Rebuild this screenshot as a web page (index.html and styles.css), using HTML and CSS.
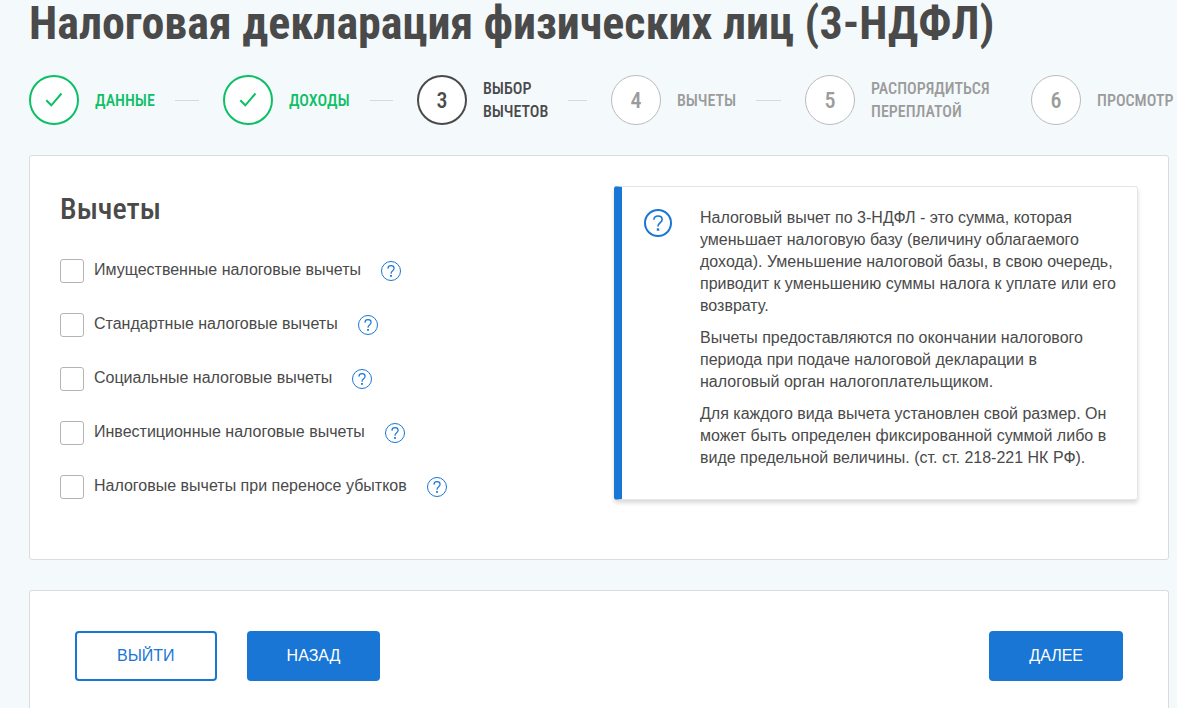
FILE: index.html
```html
<!DOCTYPE html>
<html lang="ru">
<head>
<meta charset="utf-8">
<title>Налоговая декларация физических лиц (3-НДФЛ)</title>
<link rel="stylesheet" href="styles.css">
</head>
<body>
<svg class="sprite" aria-hidden="true">
  <symbol id="question" viewBox="1 1 18 18">
    <path d="M6.9 7.6C7 5.7 8.2 4.7 10 4.7s3.1 1 3.1 2.6c0 1.4-.9 2-1.7 2.7-.9.7-1.4 1.2-1.4 2.7" fill="none" stroke="currentColor" stroke-width="1.2"/>
    <rect x="9.1" y="14" width="1.8" height="1.8" fill="currentColor"/>
  </symbol>
  <symbol id="check" viewBox="0 0 18 16">
    <path d="M1.3 8.3l5 5L16.5 1.5" fill="none" stroke="currentColor" stroke-width="2"/>
  </symbol>
</svg>
<div class="page">
  <h1 class="title">Налоговая декларация физических лиц (3-НДФЛ)</h1>

  <ol class="steps">
    <li class="step step--done"><span class="step-mark"><svg class="step-check"><use href="#check"/></svg></span><span class="step-label">Данные</span></li>
    <li class="step step--done"><span class="step-mark"><svg class="step-check"><use href="#check"/></svg></span><span class="step-label">Доходы</span></li>
    <li class="step step--current" aria-current="step"><span class="step-mark">3</span><span class="step-label">Выбор<br>вычетов</span></li>
    <li class="step"><span class="step-mark">4</span><span class="step-label">Вычеты</span></li>
    <li class="step step--plain"><span class="step-mark">5</span><span class="step-label">Распорядиться<br>переплатой</span></li>
    <li class="step step--plain"><span class="step-mark">6</span><span class="step-label">Просмотр</span></li>
  </ol>

  <main class="card deductions">
    <section class="choices">
      <h2 class="subtitle">Вычеты</h2>
      <div class="choice"><input class="box" type="checkbox" id="d1"><label class="choice-label" for="d1">Имущественные налоговые вычеты</label><button class="help" type="button" aria-label="Справка"><svg class="help-icon"><use href="#question"/></svg></button></div>
      <div class="choice"><input class="box" type="checkbox" id="d2"><label class="choice-label" for="d2">Стандартные налоговые вычеты</label><button class="help" type="button" aria-label="Справка"><svg class="help-icon"><use href="#question"/></svg></button></div>
      <div class="choice"><input class="box" type="checkbox" id="d3"><label class="choice-label" for="d3">Социальные налоговые вычеты</label><button class="help" type="button" aria-label="Справка"><svg class="help-icon"><use href="#question"/></svg></button></div>
      <div class="choice"><input class="box" type="checkbox" id="d4"><label class="choice-label" for="d4">Инвестиционные налоговые вычеты</label><button class="help" type="button" aria-label="Справка"><svg class="help-icon"><use href="#question"/></svg></button></div>
      <div class="choice"><input class="box" type="checkbox" id="d5"><label class="choice-label" for="d5">Налоговые вычеты при переносе убытков</label><button class="help" type="button" aria-label="Справка"><svg class="help-icon"><use href="#question"/></svg></button></div>
    </section>
    <aside class="info">
      <span class="info-mark"><svg class="info-icon"><use href="#question"/></svg></span>
      <div class="info-text">
        <p>Налоговый вычет по 3-НДФЛ - это сумма, которая уменьшает налоговую базу (величину облагаемого дохода). Уменьшение налоговой базы, в свою очередь, приводит к уменьшению суммы налога к уплате или его возврату.</p>
        <p>Вычеты предоставляются по окончании налогового периода при подаче налоговой декларации в налоговый орган налогоплательщиком.</p>
        <p>Для каждого вида вычета установлен свой размер. Он может быть определен фиксированной суммой либо в виде предельной величины. (ст. ст. 218-221 НК РФ).</p>
      </div>
    </aside>
  </main>

  <div class="card actions">
    <button class="btn btn--outline" type="button">ВЫЙТИ</button>
    <button class="btn" type="button">НАЗАД</button>
    <button class="btn btn--next" type="button">ДАЛЕЕ</button>
  </div>
</div>
</body>
</html>
```
FILE: styles.css
```css
* { box-sizing: border-box; }

body {
  margin: 0;
  background: #f4f9fc;
  color: #4a4a4a;
  font: 16px/22px "Liberation Sans", Arial, sans-serif;
}

.sprite { position: absolute; width: 0; height: 0; }

.page {
  display: flex;
  flex-direction: column;
  min-height: 100vh;
  padding: 0 8px 0 29px;
}

.title, .subtitle, .steps {
  font-family: "Roboto Condensed", "Liberation Sans Narrow", "Liberation Sans", sans-serif;
}

.title {
  margin: 0 0 29px;
  font-size: 46px;
  line-height: 46px;
  font-weight: 700;
  white-space: nowrap;
}

.steps {
  display: grid;
  grid-template-columns: repeat(4, 97fr) 113fr 69fr;
  margin: 0 0 30px;
  padding: 0;
  list-style: none;
  color: #9b9b9b;
  font-size: 16px;
  line-height: 23px;
  font-weight: 500;
}

.step { display: flex; align-items: center; min-width: 0; }

.step::after {
  content: "";
  flex: 1;
  height: 1px;
  margin: 0 24px 0 20px;
  background: #d8d8d8;
}

.step--plain::after { display: none; }

.step-mark {
  display: flex;
  flex: none;
  align-items: center;
  justify-content: center;
  width: 50px;
  height: 50px;
  margin-right: 16px;
  border: 1px solid #bbb;
  border-radius: 50%;
  background: #fff;
  font-size: 22px;
}

.step-label { text-transform: uppercase; white-space: nowrap; }
.step-check { width: 18px; height: 16px; }
.step--done { color: #0dbf66; }
.step--done .step-mark { border: 2px solid #0dbf66; }
.step--current { color: #4a4a4a; }
.step--current .step-mark { border: 2px solid #4a4a4a; }

.card {
  border: 1px solid #dcdcdc;
  border-radius: 3px;
  background: #fff;
}

.deductions {
  display: grid;
  grid-template-columns: 1fr 524px;
  gap: 30px;
  align-items: start;
  margin-bottom: 30px;
  padding: 30px 30px 59px;
}

.subtitle {
  margin: 0 0 27px;
  font-size: 30px;
  line-height: 46px;
  font-weight: 500;
}

.choice { display: flex; align-items: center; height: 24px; }
.choice + .choice { margin-top: 30px; }

.box {
  appearance: none;
  flex: none;
  width: 24px;
  height: 24px;
  margin: 0 10px 0 0;
  border: 1px solid #b4b4b4;
  border-radius: 3px;
  background: #fff;
}

.box:checked { background: #1976d5; }

.choice-label { align-self: flex-start; line-height: 22px; }

.help {
  display: flex;
  width: 20px;
  height: 20px;
  margin-left: 20px;
  padding: 0;
  border: 1px solid #1976d5;
  border-radius: 50%;
  background: none;
  color: #1976d5;
}

.help-icon { width: 18px; height: 18px; }

.info {
  display: flex;
  align-items: flex-start;
  gap: 28px;
  padding: 20px 20px 30px 22px;
  border: 1px solid #e6e6e6;
  border-left: 8px solid #1976d5;
  border-radius: 3px;
  box-shadow: 0 3px 4px rgba(0, 0, 0, 0.15);
}

.info-mark {
  display: flex;
  flex: none;
  width: 28px;
  height: 28px;
  margin-top: 2px;
  border: 2px solid #1976d5;
  border-radius: 50%;
  color: #1976d5;
}

.info-icon { width: 24px; height: 24px; }
.info-text p { margin: 0; }
.info-text p + p { margin-top: 10px; }

.actions {
  display: flex;
  flex: 1;
  align-items: flex-start;
  gap: 30px;
  padding: 40px 45px 26px;
  border-bottom: 0;
  border-radius: 3px 3px 0 0;
}

.btn {
  height: 50px;
  padding: 0 40px;
  border: 0;
  border-radius: 4px;
  background: #1976d5;
  color: #fff;
  font: inherit;
}

.btn--outline {
  border: 2px solid #1976d5;
  background: #fff;
  color: #1976d5;
}

.btn--next { margin-left: auto; }
```
